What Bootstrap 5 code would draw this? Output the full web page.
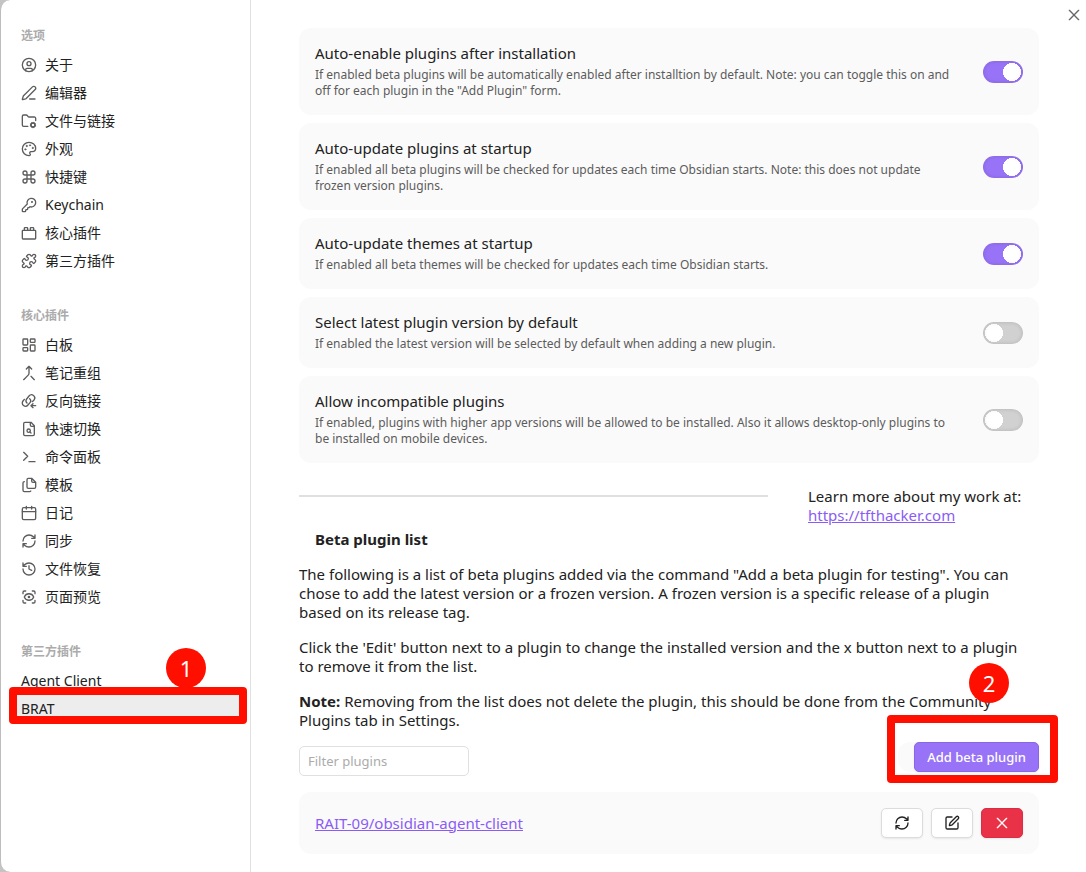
<!DOCTYPE html>
<html lang="zh-CN">
<head>
<meta charset="utf-8">
<meta name="viewport" content="width=device-width, initial-scale=1">
<title>BRAT</title>
<link href="https://cdn.jsdelivr.net/npm/bootstrap@5.3.0/dist/css/bootstrap.min.css" rel="stylesheet">
<style>
:root{--accent:#9873f7;--accent-text:#8a5cf5;--ink:#222;--muted-ink:#5c5c5c;--faint:#ababab;--line:#e0e0e0;--soft:#fafafa;--callout:#ff0f00}
body{font-family:"Noto Sans","Noto Sans CJK SC",sans-serif;font-size:15px;line-height:19px;color:var(--ink);background:#c4c4c4}
a{color:var(--accent-text)}
.settings-window{background:#fff;border-left:1px solid #bdbdbd;border-radius:10px 0 0 10px}
.side-pane{width:250px;flex:none;border-right:1px solid var(--line);padding:26px 8px 0 12px}
.side-group{margin-bottom:32px}
.side-title{font-size:12px;line-height:20px;font-weight:600;color:var(--faint);margin:0 0 4px;padding-left:8px}
.side-item{display:flex;align-items:center;gap:8px;height:28px;padding:0 8px;font-size:14px;color:var(--ink);text-decoration:none;border-radius:5px}
.side-item.active{background:#ededed}
.ico{width:16px;height:16px;fill:none;stroke:currentColor;stroke-width:2;stroke-linecap:round;stroke-linejoin:round;flex:none}
.side-item .ico{color:var(--muted-ink);margin-top:2px}
.main-pane{padding:28px 47px 16px 48px;min-width:0}
.option{background:var(--soft);border-radius:12px;padding:16px}
.option-name{margin-bottom:4px}
.option-desc{font-size:12px;line-height:16px;color:var(--muted-ink)}
.form-switch .form-check-input{width:40px;height:22px;margin:0;border:0;background-color:#d1d1d1;background-size:18px 18px;background-repeat:no-repeat;background-position:2px center;box-shadow:inset 0 0 4px #00000026;background-image:radial-gradient(circle,#fff 9px,transparent 9px)}
.form-switch .form-check-input:checked{background-color:var(--accent);background-position:20px center;background-image:radial-gradient(circle,#fff 9px,transparent 9px)}
.rule{height:2px;background:var(--line);opacity:1;border:0}
.more{width:231px}
.list-title{font-size:15px;line-height:20px}
.intro p{margin-bottom:16px}
.intro p:last-child{margin-bottom:12px}
.filter-box{width:170px;height:30px;padding:0 8px;font-size:13px;border-color:var(--line);border-radius:5px}
.filter-box::placeholder{color:var(--faint)}
.add-wrap{background:var(--soft);border-radius:12px;padding-left:16px}
.tool-btn{height:30px;border-radius:5px;font-size:13px;line-height:18px;padding:0 12px;display:flex;align-items:center;justify-content:center;border:1px solid #dcdcdc;background:#fff;color:var(--ink);box-shadow:0 1px 2px #00000014}
.tool-btn.icon-only{width:42px}
.tool-btn.primary{background:var(--accent);border-color:#8a66e4;color:#fff;font-weight:500}
.tool-btn.remove{background:#e93147;border-color:#d92f44;color:#fff}
.close-btn{top:7px;right:4px;color:#666;line-height:0}
.mark-frame{position:absolute;border:8px solid var(--callout);border-radius:4px;pointer-events:none}
.mark-dot{position:absolute;width:40px;height:40px;border-radius:50%;background:var(--callout);color:#fff;font-size:22px;line-height:40px;text-align:center}
.frame-one{inset:-7px -5px -2px -4px}
.dot-one{right:36px;bottom:34px}
.frame-two{inset:-27px -19px -11px -11px}
.dot-two{right:30px;bottom:69px}
</style>
</head>
<body>
<svg class="d-none">
<symbol id="i-user" viewBox="0 0 24 24"><circle cx="12" cy="12" r="10"/><circle cx="12" cy="10" r="3"/><path d="M7 20.6V19a2 2 0 0 1 2-2h6a2 2 0 0 1 2 2v1.6"/></symbol>
<symbol id="i-pen" viewBox="0 0 24 24"><path d="M13 21h8M21.2 6.8a2.8 2.8 0 0 0-4-4L3.800 16.200a2 2 0 0 0-.5.8L2 21.400a.5.5 0 0 0 .6.6l4.400-1.300a2 2 0 0 0 .8-.5z"/></symbol>
<symbol id="i-folder" viewBox="0 0 24 24"><path d="M10.300 20H4a2 2 0 0 1-2-2V5a2 2 0 0 1 2-2h3.900a2 2 0 0 1 1.700.9l.8 1.200a2 2 0 0 0 1.700.9H20a2 2 0 0 1 2 2v3.300"/><circle cx="18" cy="18" r="3"/><path d="m21.700 19.400-.9-.3m-5.600-2.200-.9-.3m2.300 5.100.3-.9m2.300-5.600.2-.9m-.2 7.400-.4-1m-2-5.300-.4-1m-2.100 5 1-.4m5.300-2.100 1-.4"/></symbol>
<symbol id="i-palette" viewBox="0 0 24 24"><path d="M12 22a10 10 0 0 1 0-20c5.500 0 10 4 10 9a5 5 0 0 1-5 5h-2.200a1.800 1.800 0 0 0-1.400 2.800l.3.400a1.800 1.800 0 0 1-1.400 2.800z"/><g fill="currentColor" stroke-width="1"><circle cx="13.500" cy="6.500" r="1"/><circle cx="17.500" cy="10.500" r="1"/><circle cx="6.500" cy="12.500" r="1"/><circle cx="8.500" cy="7.500" r="1"/></g></symbol>
<symbol id="i-command" viewBox="0 0 24 24"><path d="M15 6v12a3 3 0 1 0 3-3H6a3 3 0 1 0 3 3V6a3 3 0 1 0-3 3h12a3 3 0 1 0-3-3"/></symbol>
<symbol id="i-key" viewBox="0 0 24 24"><path d="M2.600 17.400A2 2 0 0 0 2 18.800V21a1 1 0 0 0 1 1h3a1 1 0 0 0 1-1v-1a1 1 0 0 1 1-1h1a1 1 0 0 0 1-1v-1a1 1 0 0 1 1-1h.2a2 2 0 0 0 1.400-.6l.8-.8a6.500 6.500 0 1 0-4-4z"/><circle cx="16.500" cy="7.500" r=".6" fill="currentColor"/></symbol>
<symbol id="i-brick" viewBox="0 0 24 24"><rect x="2" y="8" width="20" height="13" rx="1"/><path d="M10 8V5a1 1 0 0 0-1-1H6a1 1 0 0 0-1 1v3m14 0V5a1 1 0 0 0-1-1h-3a1 1 0 0 0-1 1v3"/></symbol>
<symbol id="i-puzzle" viewBox="0 0 24 24"><path d="M15.390 4.390a1 1 0 0 0 1.680-.474 2.500 2.500 0 1 1 3.014 3.015 1 1 0 0 0-.474 1.680l1.683 1.682a2.414 2.414 0 0 1 0 3.414L19.610 15.390a1 1 0 0 1-1.680-.474 2.500 2.500 0 1 0-3.014 3.015 1 1 0 0 1 .474 1.680l-1.683 1.682a2.414 2.414 0 0 1-3.414 0L8.610 19.610a1 1 0 0 0-1.680.474 2.500 2.500 0 1 1-3.014-3.015 1 1 0 0 0 .474-1.680l-1.683-1.682a2.414 2.414 0 0 1 0-3.414L4.390 8.610a1 1 0 0 1 1.680.474 2.500 2.500 0 1 0 3.014-3.015 1 1 0 0 1-.474-1.680l1.683-1.682a2.414 2.414 0 0 1 3.414 0z"/></symbol>
<symbol id="i-board" viewBox="0 0 24 24"><rect x="3" y="3" width="7" height="9" rx="1"/><rect x="14" y="3" width="7" height="5" rx="1"/><rect x="14" y="12" width="7" height="9" rx="1"/><rect x="3" y="16" width="7" height="5" rx="1"/></symbol>
<symbol id="i-merge" viewBox="0 0 24 24"><path d="m8 6 4-4 4 4M12 2v10.300a4 4 0 0 1-1.200 2.900L4 22m16 0-5-5"/></symbol>
<symbol id="i-backlink" viewBox="0 0 24 24"><path d="M9 15a4.500 4.500 0 0 1-.5-6l3.500-4.500a4.800 4.800 0 0 1 7.500 6L17 13M13 8.500a4.500 4.500 0 0 1 .5 6L10.500 18A4.800 4.800 0 0 1 3 12l2-2.500M22 19h-7m3-3-3 3 3 3"/></symbol>
<symbol id="i-filesearch" viewBox="0 0 24 24"><path d="M15 2H6a2 2 0 0 0-2 2v16a2 2 0 0 0 2 2h12a2 2 0 0 0 2-2V7zM14 2v4a2 2 0 0 0 2 2h4"/><circle cx="11.500" cy="14.500" r="2.500"/><path d="M13.300 16.300 15 18"/></symbol>
<symbol id="i-terminal" viewBox="0 0 24 24"><path d="m4 17 6-6-6-6M12 19h9"/></symbol>
<symbol id="i-files" viewBox="0 0 24 24"><path d="M16 2h-5a2 2 0 0 0-2 2v11a2 2 0 0 0 2 2h9a2 2 0 0 0 2-2V8zM16 2v4a2 2 0 0 0 2 2h4M5 7a2 2 0 0 0-2 2v11a2 2 0 0 0 2 2h8a2 2 0 0 0 1.700-1"/></symbol>
<symbol id="i-calendar" viewBox="0 0 24 24"><rect x="2" y="4" width="20" height="18" rx="2"/><path d="M8 2v4m8-4v4M2 10h20"/></symbol>
<symbol id="i-sync" viewBox="0 0 24 24"><path d="M3 12a9 9 0 0 1 9-9 9.750 9.750 0 0 1 6.740 2.740L21 8M21 3v5h-5M21 12a9 9 0 0 1-9 9 9.750 9.750 0 0 1-6.740-2.740L3 16M8 16H3v5"/></symbol>
<symbol id="i-history" viewBox="0 0 24 24"><path d="M3 12a9 9 0 1 0 9-9 9.750 9.750 0 0 0-6.740 2.740L3 8M3 3v5h5M12 7v5l4 2"/></symbol>
<symbol id="i-preview" viewBox="0 0 24 24"><path d="M3 7V5a2 2 0 0 1 2-2h2m10 0h2a2 2 0 0 1 2 2v2m0 10v2a2 2 0 0 1-2 2h-2M7 21H5a2 2 0 0 1-2-2v-2"/><circle cx="12" cy="12" r="1"/><path d="M18.900 12.300a1 1 0 0 0 0-.6 7.500 7.500 0 0 0-13.800 0 1 1 0 0 0 0 .6 7.500 7.500 0 0 0 13.800 0"/></symbol>
<symbol id="i-edit" viewBox="0 0 24 24"><path d="M12 3H5a2 2 0 0 0-2 2v14a2 2 0 0 0 2 2h14a2 2 0 0 0 2-2v-7"/><path d="M18.400 2.600a2.100 2.100 0 0 1 3 3l-9 9a2 2 0 0 1-.9.500l-2.800.9a.5.5 0 0 1-.6-.6l.8-2.900a2 2 0 0 1 .5-.9z"/></symbol>
<symbol id="i-x" viewBox="0 0 24 24"><path d="M19 5 5 19M5 5l14 14"/></symbol>
</svg>

<div class="settings-window d-flex min-vh-100 position-relative">
  <nav class="side-pane">
    <section class="side-group">
      <h2 class="side-title">选项</h2>
      <a class="side-item" href="#"><svg class="ico"><use href="#i-user"/></svg>关于</a>
      <a class="side-item" href="#"><svg class="ico"><use href="#i-pen"/></svg>编辑器</a>
      <a class="side-item" href="#"><svg class="ico"><use href="#i-folder"/></svg>文件与链接</a>
      <a class="side-item" href="#"><svg class="ico"><use href="#i-palette"/></svg>外观</a>
      <a class="side-item" href="#"><svg class="ico"><use href="#i-command"/></svg>快捷键</a>
      <a class="side-item" href="#"><svg class="ico"><use href="#i-key"/></svg>Keychain</a>
      <a class="side-item" href="#"><svg class="ico"><use href="#i-brick"/></svg>核心插件</a>
      <a class="side-item" href="#"><svg class="ico"><use href="#i-puzzle"/></svg>第三方插件</a>
    </section>
    <section class="side-group">
      <h2 class="side-title">核心插件</h2>
      <a class="side-item" href="#"><svg class="ico"><use href="#i-board"/></svg>白板</a>
      <a class="side-item" href="#"><svg class="ico"><use href="#i-merge"/></svg>笔记重组</a>
      <a class="side-item" href="#"><svg class="ico"><use href="#i-backlink"/></svg>反向链接</a>
      <a class="side-item" href="#"><svg class="ico"><use href="#i-filesearch"/></svg>快速切换</a>
      <a class="side-item" href="#"><svg class="ico"><use href="#i-terminal"/></svg>命令面板</a>
      <a class="side-item" href="#"><svg class="ico"><use href="#i-files"/></svg>模板</a>
      <a class="side-item" href="#"><svg class="ico"><use href="#i-calendar"/></svg>日记</a>
      <a class="side-item" href="#"><svg class="ico"><use href="#i-sync"/></svg>同步</a>
      <a class="side-item" href="#"><svg class="ico"><use href="#i-history"/></svg>文件恢复</a>
      <a class="side-item" href="#"><svg class="ico"><use href="#i-preview"/></svg>页面预览</a>
    </section>
    <section>
      <h2 class="side-title">第三方插件</h2>
      <a class="side-item" href="#">Agent Client</a>
      <div class="position-relative">
        <a class="side-item active" href="#" aria-current="page">BRAT</a>
        <span class="mark-frame frame-one"></span>
        <span class="mark-dot dot-one">1</span>
      </div>
    </section>
  </nav>

  <main class="main-pane flex-grow-1">
    <div class="d-flex flex-column gap-2">
      <div class="option d-flex align-items-center gap-3">
        <div class="flex-grow-1"><label class="option-name d-block" for="s1">Auto-enable plugins after installation</label>
          <div class="option-desc">If enabled beta plugins will be automatically enabled after installtion by default. Note: you can toggle this on and<br>off for each plugin in the "Add Plugin" form.</div></div>
        <div class="form-switch p-0 m-0 d-flex"><input class="form-check-input" type="checkbox" role="switch" id="s1" checked></div>
      </div>
      <div class="option d-flex align-items-center gap-3">
        <div class="flex-grow-1"><label class="option-name d-block" for="s2">Auto-update plugins at startup</label>
          <div class="option-desc">If enabled all beta plugins will be checked for updates each time Obsidian starts. Note: this does not update<br>frozen version plugins.</div></div>
        <div class="form-switch p-0 m-0 d-flex"><input class="form-check-input" type="checkbox" role="switch" id="s2" checked></div>
      </div>
      <div class="option d-flex align-items-center gap-3">
        <div class="flex-grow-1"><label class="option-name d-block" for="s3">Auto-update themes at startup</label>
          <div class="option-desc">If enabled all beta themes will be checked for updates each time Obsidian starts.</div></div>
        <div class="form-switch p-0 m-0 d-flex"><input class="form-check-input" type="checkbox" role="switch" id="s3" checked></div>
      </div>
      <div class="option d-flex align-items-center gap-3">
        <div class="flex-grow-1"><label class="option-name d-block" for="s4">Select latest plugin version by default</label>
          <div class="option-desc">If enabled the latest version will be selected by default when adding a new plugin.</div></div>
        <div class="form-switch p-0 m-0 d-flex"><input class="form-check-input" type="checkbox" role="switch" id="s4"></div>
      </div>
      <div class="option d-flex align-items-center gap-3">
        <div class="flex-grow-1"><label class="option-name d-block" for="s5">Allow incompatible plugins</label>
          <div class="option-desc">If enabled, plugins with higher app versions will be allowed to be installed. Also it allows desktop-only plugins to<br>be installed on mobile devices.</div></div>
        <div class="form-switch p-0 m-0 d-flex"><input class="form-check-input" type="checkbox" role="switch" id="s5"></div>
      </div>
    </div>

    <div class="d-flex mt-4">
      <hr class="rule flex-grow-1 mt-2 mb-0 me-3">
      <div class="more ms-4">Learn more about my work at:<br><a href="#">https://tfthacker.com</a></div>
    </div>

    <h3 class="list-title fw-bold mb-3 px-3 pt-1">Beta plugin list</h3>
    <div class="intro">
      <p>The following is a list of beta plugins added via the command "Add a beta plugin for testing". You can<br>chose to add the latest version or a frozen version. A frozen version is a specific release of a plugin<br>based on its release tag.</p>
      <p>Click the 'Edit' button next to a plugin to change the installed version and the x button next to a plugin<br>to remove it from the list.</p>
      <p><strong>Note:</strong> Removing from the list does not delete the plugin, this should be done from the Community<br>Plugins tab in Settings.</p>
    </div>

    <div class="d-flex justify-content-between mb-3">
      <input class="form-control filter-box mt-1" type="text" placeholder="Filter plugins" aria-label="Filter plugins">
      <div class="add-wrap position-relative mb-1">
        <button class="tool-btn primary" type="button">Add beta plugin</button>
        <span class="mark-frame frame-two"></span>
        <span class="mark-dot dot-two">2</span>
      </div>
    </div>

    <div class="option d-flex align-items-center gap-2">
      <a class="me-auto" href="#">RAIT-09/obsidian-agent-client</a>
      <button class="tool-btn icon-only p-0" type="button" aria-label="Check for updates"><svg class="ico"><use href="#i-sync"/></svg></button>
      <button class="tool-btn icon-only p-0" type="button" aria-label="Edit"><svg class="ico"><use href="#i-edit"/></svg></button>
      <button class="tool-btn icon-only remove p-0" type="button" aria-label="Remove"><svg class="ico"><use href="#i-x"/></svg></button>
    </div>
  </main>
  <button class="close-btn position-absolute border-0 bg-transparent p-0" type="button" aria-label="Close"><svg class="ico"><use href="#i-x"/></svg></button>
</div>
<script src="https://cdn.jsdelivr.net/npm/bootstrap@5.3.0/dist/js/bootstrap.bundle.min.js"></script>
</body>
</html>
